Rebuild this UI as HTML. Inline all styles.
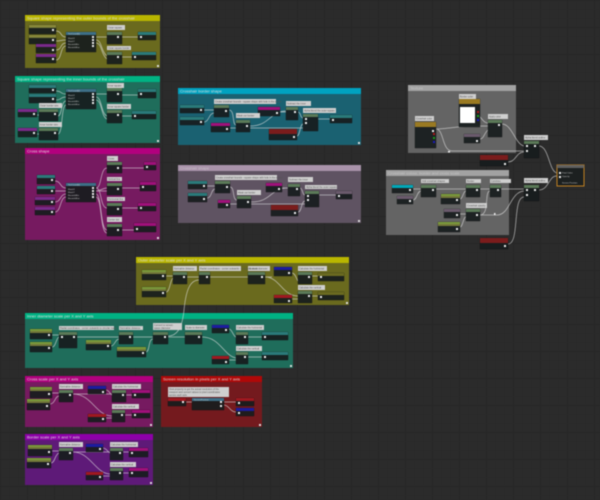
<!DOCTYPE html>
<html><head><meta charset="utf-8"><style>
html,body{margin:0;padding:0;background:#2a2a2a;width:600px;height:500px;overflow:hidden}
svg{display:block;filter:blur(.42px)}
text{font-family:"Liberation Sans",sans-serif}
.t{font-size:4px;fill:#dcdcdc}
.c{font-size:2.4px;fill:#555}
.n{font-size:2.2px;fill:#c8c8c8}
.w{fill:none;stroke:#e0e0e0;stroke-width:.75;opacity:.72}
</style></head><body>
<svg width="600" height="500" viewBox="0 0 600 500" xmlns="http://www.w3.org/2000/svg">
<defs><pattern id="g" width="27" height="27" patternUnits="userSpaceOnUse"><rect width="27" height="27" fill="#2b2b2b"/><path d="M0 .5H27M.5 0V27" stroke="#262626" stroke-width="1"/><path d="M0 9.5H27M0 18.5H27M9.5 0V27M18.5 0V27" stroke="#292929" stroke-width=".7"/></pattern></defs>
<rect width="600" height="500" fill="url(#g)"/>

<!-- comment frames -->
<rect x="25" y="15" width="135" height="53" fill="#6a6a1e"/><rect x="25" y="15" width="135" height="6" fill="#b9b600"/>
<rect x="15" y="76" width="145" height="67" fill="#1f6d5b"/><rect x="15" y="76" width="145" height="6" fill="#00b283"/>
<rect x="25" y="148" width="135" height="92" fill="#761a60"/><rect x="25" y="148" width="135" height="6" fill="#b2007e"/>
<rect x="178" y="88" width="183" height="57" fill="#1a6171"/><rect x="178" y="88" width="183" height="6" fill="#00a2c0"/>
<rect x="178" y="165" width="183" height="58" fill="#5f5362"/><rect x="178" y="165" width="183" height="6" fill="#a993aa"/>
<rect x="408" y="85" width="108" height="68" fill="#646464"/><rect x="408" y="85" width="108" height="6" fill="#a2a2a2"/>
<rect x="386" y="170" width="123" height="65" fill="#646464"/><rect x="386" y="170" width="123" height="6" fill="#a2a2a2"/>
<rect x="136" y="257" width="213" height="48" fill="#6a6a1e"/><rect x="136" y="257" width="213" height="6" fill="#b9b600"/>
<rect x="25" y="313" width="268" height="55" fill="#1f6d5b"/><rect x="25" y="313" width="268" height="6" fill="#00b283"/>
<rect x="25" y="376" width="128" height="51" fill="#761a60"/><rect x="25" y="376" width="128" height="6" fill="#b2007e"/>
<rect x="161" y="376" width="101" height="51" fill="#741a1e"/><rect x="161" y="376" width="101" height="6" fill="#b00808"/>
<rect x="25" y="434" width="128" height="51" fill="#5e1a78"/><rect x="25" y="434" width="128" height="6" fill="#8d00a8"/>

<text class="t" x="27" y="19.6">Square shape representing the outer bounds of the crosshair</text>
<text class="t" x="17" y="80.6">Square shape representing the inner bounds of the crosshair</text>
<text class="t" x="27" y="152.6">Cross shape</text>
<text class="t" x="180" y="92.6">Crosshair border shape</text>
<text class="t" x="180" y="169.6" fill-opacity=".6">Crosshair shape</text>
<text class="t" x="410" y="89.6" fill-opacity=".6">Texture</text>
<text class="t" x="388" y="174.6" fill-opacity=".6">Crosshair colour, border and cross scale</text>
<text class="t" x="138" y="261.6">Outer diameter scale per X and Y axis</text>
<text class="t" x="27" y="317.6">Inner diameter scale per X and Y axis</text>
<text class="t" x="27" y="380.6">Cross scale per X and Y axis</text>
<text class="t" x="163" y="380.6">Screen resolution in pixels per X and Y axis</text>
<text class="t" x="27" y="438.6">Border scale per X and Y axis</text>

<!-- wires -->
<g class="w">
<path d="M56 31C62 31 60 37 66 37M56 41C62 41 60 40 66 40M56 50C62 50 60 43 66 43M56 60C62 60 60 46 66 46M96 37H107M96 40C102 40 101 52 107 56M96 43C102 43 101 55 107 59M122 37H138M122 57H132"/>
<path d="M56 91C62 91 60 94 66 94M56 100C62 100 60 97 66 97M37 115H39M37 134H39M58 116C62 116 61 101 66 101M58 134C63 134 61 105 66 105M96 94H107M96 97C102 97 101 114 107 116M96 100C102 100 101 117 107 119M122 95H138M122 116H132"/>
<path d="M55 181C61 181 60 188 66 188M55 191C61 191 60 191 66 191M55 202C61 202 60 194 66 194M55 212C61 212 60 197 66 197M96 188C102 188 100 168 107 168M96 191C100 191 103 188 107 188M96 188C102 188 100 208 107 208M96 194C102 194 100 230 107 230M96 197C102 197 100 233 107 233M96 191H107M122 168H144M122 188H140M122 208H138M122 230H134"/>
<path d="M204 110H214M204 122C209 122 209 113 214 113M229 110C235 110 232 125 236 125M230 128H236M250 126C270 126 270 111 286 111M280 112H286M250 128H303M298 112C301 112 300 118 303 118M297 136C300 136 300 124 303 124M318 119H330"/>
<path d="M207 186H215M207 198C212 198 211 189 215 189M230 187C235 187 232 200 237 200M230 204H237M251 202C272 202 270 188 288 188M282 188H288M251 204H305M300 188C303 188 302 195 305 195M298 212C302 212 301 201 305 201M319 195H336"/>
<path d="M436 129C448 129 452 126 488 126M436 129C444 129 442 151 452 151H524M475 115C482 115 482 123 488 123M480 139C484 139 484 133 488 130M502 124C512 124 515 144 524 146M508 162C516 162 516 152 524 152M539 146C549 146 549 172 557 173M539 190C549 190 549 175 557 176M508 244C520 244 512 197 524 197M501 189H524"/>
<path d="M413 189H421M413 200C417 200 417 191 421 191M436 189H466M460 199C463 199 463 191 466 191M480 189H490M460 214H466M460 227C463 227 463 217 466 217M480 215C490 215 484 191 490 191M480 215H497C510 215 510 192 524 191"/>
<path d="M166 276H173M166 292C170 292 170 280 173 278M187 277H199M210 277H248M199 280C190 280 186 290 184 310C182 330 176 336 168 336M265 277C280 277 282 296 298 296M265 277H272M292 273C295 273 296 278 298 281M292 299H298M312 276H318M312 296H318"/>
<path d="M52 335H59M52 347C56 347 56 338 59 337M77 337H119M111 346C115 346 115 339 119 339M133 337H153M146 352C150 352 148 339 153 339M168 337H185M202 337C220 337 224 356 236 358M229 329C232 329 233 336 236 337M229 360H236M248 337H262M248 357H262"/>
<path d="M52 393H59M50 404C55 404 55 396 59 396M73 394C92 394 96 416 112 416M73 394H112M106 390C109 390 110 394 112 395M106 418H112M126 395H132M125 415H132"/>
<path d="M186 402H192M224 402H236M224 405C229 405 230 412 236 412"/>
<path d="M52 451H59M51 463C55 463 55 454 59 453M73 452C90 452 96 474 110 474M73 452H110M103 448C106 448 108 452 110 453M103 476H110M123 452H129M123 473H129"/>
</g>

<!-- node bodies -->
<path fill="#171c1d" fill-opacity=".92" stroke="#101212" stroke-opacity=".7" stroke-width=".5" stroke-linejoin="round" d="
M29 25h27v9h-27zM29 35h27v9h-27zM36 44h20v9h-20zM36 54h20v9h-20zM66 32h30v20h-30zM107 32h15v12h-15zM107 52h15v12h-15zM138 32h18v8h-18zM132 52h24v8h-24z
M29 85h27v8h-27zM29 94h27v9h-27zM18 109h19v8h-19zM39 109h19v12h-19zM18 128h19v9h-19zM39 128h19v12h-19zM66 89h30v20h-30zM107 88h15v14h-15zM107 110h15v13h-15zM138 89h18v9h-18zM132 111h24v8h-24z
M107 162h15v11h-15zM144 162h12v8h-12zM107 183h15v12h-15zM140 182h16v9h-16zM107 203h15v12h-15zM138 203h18v8h-18zM107 224h15v12h-15zM134 223h22v9h-22zM37 175h18v9h-18zM37 186h18v8h-18zM35 197h20v8h-20zM35 207h20v8h-20zM66 183h30v19h-30z
M180 105h24v8h-24zM180 117h24v8h-24zM214 105h15v12h-15zM236 120h14v12h-14zM211 123h19v9h-19zM258 107h22v9h-22zM286 107h12v13h-12zM303 114h15v17h-15zM269 129h28v11h-28zM330 115h22v8h-22z
M188 181h19v8h-19zM188 193h19v9h-19zM215 181h15v12h-15zM237 196h14v12h-14zM218 200h12v8h-12zM266 183h16v9h-16zM288 184h12v12h-12zM305 191h14v16h-14zM271 205h27v11h-27zM336 191h16v8h-16z
M459 99h21v28h-21zM415 122h21v26h-21zM488 120h14v17h-14zM464 134h16v9h-16zM524 141h15v17h-15zM480 155h28v11h-28zM480 238h28v11h-28zM524 185h15v16h-15z
M392 185h21v8h-21zM397 196h16v8h-16zM421 185h15v12h-15zM466 185h14v12h-14zM490 185h11v12h-11zM441 194h19v10h-19zM466 209h14v12h-14zM444 209h16v9h-16zM438 222h22v10h-22z
M142 270h24v10h-24zM142 287h24v10h-24zM173 272h14v12h-14zM199 272h11v12h-11zM248 272h17v12h-17zM274 267h18v9h-18zM298 272h14v12h-14zM318 273h26v8h-26zM298 291h14v12h-14zM274 295h18v8h-18zM318 292h26v8h-26z
M30 329h22v10h-22zM30 342h22v10h-22zM59 332h18v16h-18zM86 340h25v10h-25zM119 332h14v12h-14zM117 347h29v10h-29zM153 332h15v12h-15zM185 332h17v12h-17zM212 325h17v8h-17zM236 332h12v12h-12zM262 332h26v8h-26zM236 352h12v12h-12zM212 356h17v8h-17zM262 352h26v8h-26z
M30 387h22v11h-22zM27 399h23v11h-23zM59 390h14v12h-14zM88 386h18v8h-18zM112 390h14v12h-14zM132 390h18v8h-18zM112 410h13v12h-13zM88 414h18v8h-18zM132 410h18v8h-18z
M168 398h18v8h-18zM192 398h32v12h-32zM236 398h18v8h-18zM236 408h18v8h-18z
M28 445h24v11h-24zM27 458h24v10h-24zM59 448h14v12h-14zM86 444h17v8h-17zM110 448h13v12h-13zM129 448h19v9h-19zM110 468h13v12h-13zM86 472h17v8h-17zM129 468h19v9h-19z"/>

<!-- headers -->
<path fill="#74793a" d="M29 25h27v3h-27zM29 35h27v3h-27zM142 270h24v4h-24zM142 287h24v4h-24zM30 329h22v4h-22zM30 342h22v4h-22zM86 340h25v4h-25zM117 347h29v4h-29zM30 387h22v4h-22zM27 399h23v4h-23zM28 445h24v4h-24zM27 458h24v4h-24zM441 194h19v4h-19zM438 222h22v4h-22z"/>
<path fill="#5b7a58" d="M107 32h15v3h-15zM107 52h15v3h-15zM107 88h15v3h-15zM107 110h15v3h-15zM39 109h19v3h-19zM39 128h19v3h-19zM107 162h15v3h-15zM107 183h15v3h-15zM107 203h15v3h-15zM107 224h15v3h-15zM214 105h15v3h-15zM236 120h14v3h-14zM286 107h12v3h-12zM303 114h15v3h-15zM215 181h15v3h-15zM237 196h14v3h-14zM288 184h12v3h-12zM305 191h14v3h-14zM488 120h14v3h-14zM524 141h15v3h-15zM524 185h15v3h-15zM421 185h15v3h-15zM466 185h14v3h-14zM490 185h11v3h-11zM466 209h14v3h-14zM173 272h14v3h-14zM199 272h11v3h-11zM248 272h17v3h-17zM298 272h14v3h-14zM298 291h14v3h-14zM59 332h18v3h-18zM119 332h14v3h-14zM153 332h15v3h-15zM185 332h17v3h-17zM236 332h12v3h-12zM236 352h12v3h-12zM59 390h14v3h-14zM112 390h14v3h-14zM112 410h13v3h-13zM59 448h14v3h-14zM110 448h13v3h-13zM110 468h13v3h-13z"/>
<path fill="#3d6f87" d="M66 32h30v3h-30zM66 89h30v3h-30zM66 183h30v3h-30zM192 398h32v3h-32z"/>
<path fill="#7a9a3a" d="M142 270h24v2h-24zM142 287h24v2h-24zM30 329h22v2h-22zM30 342h22v2h-22zM30 387h22v2h-22zM27 399h23v2h-23zM28 445h24v2h-24zM27 458h24v2h-24zM441 194h19v2h-19zM438 222h22v2h-22zM86 340h25v2h-25zM117 347h29v2h-29z"/>
<path fill="#8a8a3a" d="M29 25h27v2h-27zM29 35h27v2h-27z"/>
<path fill="#2a7a7a" d="M29 85h27v3h-27zM29 94h27v3h-27zM138 32h18v3h-18zM132 52h24v3h-24zM138 89h18v3h-18zM132 111h24v3h-24zM37 175h18v3h-18zM37 186h18v3h-18zM180 105h24v3h-24zM180 117h24v3h-24zM330 115h22v3h-22zM188 181h19v3h-19zM188 193h19v3h-19zM262 332h26v3h-26zM262 352h26v3h-26z"/>
<path fill="#00a8b8" d="M392 185h21v3h-21z"/>
<path fill="#7a2a8a" d="M36 44h20v3h-20zM36 54h20v3h-20zM18 109h19v3h-19zM18 128h19v3h-19zM35 197h20v3h-20zM35 207h20v3h-20z"/>
<path fill="#a0107a" d="M211 123h19v3h-19zM258 107h22v3h-22zM218 200h12v3h-12zM266 183h16v3h-16zM144 162h12v3h-12zM140 182h16v3h-16zM138 203h18v3h-18zM134 223h22v3h-22zM132 390h18v3h-18zM132 410h18v3h-18zM129 448h19v3h-19zM129 468h19v3h-19z"/>
<path fill="#6a5a6c" d="M464 134h16v3h-16zM397 196h16v3h-16zM444 209h16v3h-16zM336 191h16v3h-16z"/>
<path fill="#7a1c1c" d="M269 129h28v5h-28zM271 205h27v5h-27zM480 155h28v5h-28zM480 238h28v5h-28z"/>
<path fill="#a01820" d="M274 295h18v3h-18zM212 356h17v3h-17zM88 414h18v3h-18zM86 472h17v3h-17zM168 398h18v3h-18zM236 398h18v3h-18z"/>
<path fill="#1c1ca0" d="M274 267h18v3h-18zM212 325h17v3h-17zM88 386h18v3h-18zM86 444h17v3h-17zM236 408h18v3h-18z"/>
<path fill="#6a6a20" d="M318 273h26v3h-26zM318 292h26v3h-26z"/>
<path fill="#9a7a22" d="M459 99h21v5h-21zM415 122h21v5h-21z"/>
<rect x="460" y="107" width="15" height="16" fill="#fff"/>

<!-- final node -->
<rect x="557" y="165" width="27" height="21" fill="#1c2020" stroke="#c08020" stroke-width="1"/>
<rect x="557" y="165" width="27" height="3" fill="#606060"/>
<text class="n" x="562" y="173.5">Final Color</text><text class="n" x="562" y="177">Opacity</text><text class="n" x="562" y="183.5">Screen Position</text>

<!-- pins -->
<path fill="#f0f0f0" d="M52 29h2v2h-2zM52 39h2v2h-2zM52 49h2v2h-2zM52 58h2v2h-2zM92 36h2v2h-2zM92 39h2v2h-2zM92 42h2v2h-2zM92 45h2v2h-2zM117 36h2v2h-2zM117 56h2v2h-2zM140 36h2v2h-2zM134 56h2v2h-2z
M52 89h2v2h-2zM52 98h2v2h-2zM33 113h2v2h-2zM33 132h2v2h-2zM54 113h2v2h-2zM54 132h2v2h-2zM92 93h2v2h-2zM92 96h2v2h-2zM92 99h2v2h-2zM92 102h2v2h-2zM117 93h2v2h-2zM117 114h2v2h-2zM134 115h2v2h-2zM140 93h2v2h-2z
M51 179h2v2h-2zM51 190h2v2h-2zM51 201h2v2h-2zM51 211h2v2h-2zM92 187h2v2h-2zM92 190h2v2h-2zM92 193h2v2h-2zM92 196h2v2h-2zM117 167h2v2h-2zM117 188h2v2h-2zM117 208h2v2h-2zM117 229h2v2h-2zM146 166h2v2h-2zM142 186h2v2h-2zM140 207h2v2h-2zM136 228h2v2h-2z
M200 109h2v2h-2zM200 121h2v2h-2zM225 110h2v2h-2zM246 125h2v2h-2zM226 128h2v2h-2zM276 112h2v2h-2zM294 111h2v2h-2zM305 118h2v2h-2zM305 122h2v2h-2zM293 136h2v2h-2zM332 119h2v2h-2z
M203 185h2v2h-2zM203 198h2v2h-2zM226 186h2v2h-2zM247 201h2v2h-2zM226 204h2v2h-2zM278 188h2v2h-2zM296 188h2v2h-2zM307 195h2v2h-2zM307 199h2v2h-2zM294 212h2v2h-2zM338 195h2v2h-2z
M498 124h2v2h-2zM476 140h2v2h-2zM526 145h2v2h-2zM526 150h2v2h-2zM534 145h2v2h-2zM504 163h2v2h-2zM504 245h2v2h-2zM526 189h2v2h-2zM526 194h2v2h-2zM534 189h2v2h-2zM432 130h2v2h-2zM559 172h2v2h-2zM559 176h2v2h-2z
M409 189h2v2h-2zM409 200h2v2h-2zM432 189h2v2h-2zM476 189h2v2h-2zM497 189h2v2h-2zM456 199h2v2h-2zM476 214h2v2h-2zM456 214h2v2h-2zM456 228h2v2h-2zM448 151h2v1.5h-2zM494 213h1.5v2h-1.5z
M162 275h2v2h-2zM162 292h2v2h-2zM183 276h2v2h-2zM206 276h2v2h-2zM261 276h2v2h-2zM288 272h2v2h-2zM308 276h2v2h-2zM320 276h2v2h-2zM308 295h2v2h-2zM288 300h2v2h-2zM320 296h2v2h-2z
M48 334h2v2h-2zM48 347h2v2h-2zM73 336h2v2h-2zM61 336h2v2h-2zM107 345h2v2h-2zM129 336h2v2h-2zM142 352h2v2h-2zM164 336h2v2h-2zM198 336h2v2h-2zM225 329h2v2h-2zM244 336h2v2h-2zM264 336h2v2h-2zM225 361h2v2h-2zM244 356h2v2h-2zM264 356h2v2h-2z
M48 393h2v2h-2zM46 405h2v2h-2zM69 394h2v2h-2zM102 391h2v2h-2zM122 394h2v2h-2zM134 394h2v2h-2zM121 414h2v2h-2zM102 418h2v2h-2zM134 414h2v2h-2z
M182 401h2v2h-2zM220 401h2v2h-2zM220 405h2v2h-2zM238 402h2v2h-2zM238 412h2v2h-2z
M48 451h2v2h-2zM47 463h2v2h-2zM69 452h2v2h-2zM99 448h2v2h-2zM119 452h2v2h-2zM131 452h2v2h-2zM119 472h2v2h-2zM99 476h2v2h-2zM131 472h2v2h-2z"/>

<!-- colour pins on texture nodes -->
<path fill="#b01818" d="M477 111h2v2h-2zM433 133h2v2h-2z"/><path fill="#18a018" d="M477 115h2v2h-2zM433 137h2v2h-2z"/><path fill="#1818c0" d="M477 119h2v2h-2zM433 141h2v2h-2z"/>

<!-- resize handles -->
<path fill="#ddd" d="M157 65h2v2h-2zM157 140h2v2h-2zM157 237h2v2h-2zM358 142h2v2h-2zM358 220h2v2h-2zM346 302h2v2h-2zM290 365h2v2h-2zM150 424h2v2h-2zM259 424h2v2h-2zM150 482h2v2h-2z"/>

<!-- comment bubbles -->
<path fill="#cfcfcf" d="M107 25h18v5h-18zM107 46h24v4h-24zM107 83h17v5h-17zM107 104h24v5h-24zM39 103h23v5h-23zM39 122h23v5h-23zM107 156h11v5h-11zM107 177h15v4h-15zM107 197h18v4h-18zM107 217h15v5h-15z
M214 99h62v5h-62zM236 113h24v5h-24zM286 101h25v5h-25zM303 108h33v5h-33zM215 175h62v5h-62zM237 190h24v5h-24zM288 177h25v5h-25zM305 185h32v4h-32z
M459 94h17v5h-17zM415 116h19v5h-19zM488 114h20v5h-20zM524 135h24v5h-24zM524 178h24v5h-24zM421 179h28v4h-28zM466 179h15v4h-15zM490 179h21v4h-21zM466 203h21v5h-21z
M173 266h24v5h-24zM199 266h42v5h-42zM248 266h22v5h-22zM298 266h29v5h-29zM298 285h27v5h-27z
M59 326h55v4h-55zM119 326h24v4h-24zM153 323h29v7h-29zM185 325h22v5h-22zM236 325h28v5h-28zM236 346h26v5h-26z
M59 384h24v5h-24zM112 384h29v5h-29zM112 404h27v5h-27zM168 387h61v10h-61zM59 442h24v5h-24zM110 442h28v5h-28zM110 462h26v5h-26z"/>
<g class="c">
<text x="108" y="28.6">Outer square</text><text x="108" y="49">Outer square border</text><text x="108" y="86.6">Inner square</text><text x="108" y="107.6">Inner square border</text>
<text x="40" y="106.6">Outer border size</text><text x="40" y="125.6">Inner border size</text><text x="108" y="159.6">Cross</text><text x="108" y="180">Vertical line</text><text x="108" y="200">Horizontal line</text><text x="108" y="220.6">Center dot</text>
<text x="215" y="102.6">Create crosshair bounds - square shape with hole in the center</text><text x="237" y="116.6">Mask out border</text><text x="287" y="104.6">Subtract the inner</text><text x="304" y="111.6">Alpha blend the outer square</text>
<text x="216" y="178.6">Create crosshair bounds - square shape with hole in the center</text><text x="238" y="193.6">Mask out border</text><text x="289" y="180.6">Subtract the inner</text><text x="306" y="188">Alpha blend the outer square</text>
<text x="460" y="97.6">Border color</text><text x="416" y="119.6">Crosshair color</text><text x="489" y="117.6">Apply color</text><text x="525" y="138.6">Alpha blend outline</text><text x="525" y="181.6">Alpha blend outline</text><text x="422" y="182">Add crosshair shapes</text><text x="467" y="182">Border</text><text x="491" y="182">Combine</text><text x="467" y="206.6">Crosshair opacity</text>
<text x="174" y="269.6">Normalize distance</text><text x="200" y="269.6">Radial coordinates - center outwards - to circular mask</text><text x="249" y="269.6">Scale to diameter</text><text x="299" y="269.6">Calculate the horizontal</text><text x="299" y="288.6">Calculate the vertical</text>
<text x="60" y="329">Radial coordinates - center outwards to circular mask</text><text x="120" y="329">Normalize distance</text><text x="154" y="326">Convert to screen</text><text x="154" y="329">space diameter</text><text x="186" y="328.6">Scale to diameter</text><text x="237" y="328.6">Calculate the horizontal</text><text x="237" y="349.6">Calculate the vertical</text>
<text x="60" y="387.6">Normalize distance</text><text x="113" y="387.6">Calculate the horizontal</text><text x="113" y="407.6">Calculate the vertical</text>
<text x="169" y="390">View property to get the actual resolution of the</text><text x="169" y="393">viewport and convert values to pixel coordinates</text><text x="169" y="396">across each axis</text>
<text x="60" y="445.6">Normalize distance</text><text x="111" y="445.6">Calculate the horizontal</text><text x="111" y="465.6">Calculate the vertical</text>
</g>
<g class="n">
<text x="68" y="34.6">TexCoord[0]</text><text x="68" y="91.6">TexCoord[0]</text><text x="68" y="185.6">TexCoord[0]</text><text x="194" y="400.6">ScreenPosition</text>
<text x="68" y="39">MaskX</text><text x="68" y="42">MaskY</text><text x="68" y="45">BoundsMin</text><text x="68" y="48">BoundsMax</text>
<text x="68" y="96">MaskX</text><text x="68" y="99">MaskY</text><text x="68" y="102">BoundsMin</text><text x="68" y="105">BoundsMax</text>
<text x="68" y="190">MaskX</text><text x="68" y="193">MaskY</text><text x="68" y="196">BoundsMin</text><text x="68" y="199">BoundsMax</text>
</g>
</svg>
</body></html>
